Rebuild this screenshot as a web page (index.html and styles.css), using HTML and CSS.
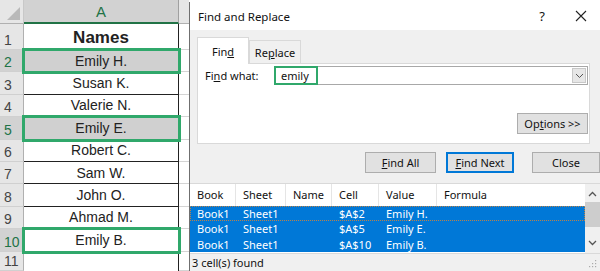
FILE: index.html
```html
<!DOCTYPE html>
<html lang="en">
<head>
<meta charset="UTF-8" />
<title>Find and Replace</title>
<link rel="stylesheet" href="styles.css">
</head>
<body>
<div class="sheet">
<div class="corner"><span class="tri"></span></div><div class="colhead sel">A</div><div class="colhead">&nbsp;</div>
<div class="rh">1</div><div class="cell head">Names</div><div class="cb"></div>
<div class="rh sel">2</div><div class="cell found">Emily H.</div><div class="cb"></div>
<div class="rh">3</div><div class="cell">Susan K.</div><div class="cb"></div>
<div class="rh">4</div><div class="cell">Valerie N.</div><div class="cb"></div>
<div class="rh sel">5</div><div class="cell found">Emily E.</div><div class="cb"></div>
<div class="rh">6</div><div class="cell">Robert C.</div><div class="cb"></div>
<div class="rh">7</div><div class="cell">Sam W.</div><div class="cb"></div>
<div class="rh">8</div><div class="cell">John O.</div><div class="cb"></div>
<div class="rh">9</div><div class="cell">Ahmad M.</div><div class="cb"></div>
<div class="rh sel">10</div><div class="cell active">Emily B.</div><div class="cb"></div>
<div class="rh">11</div><div class="cell last"></div><div class="cb"></div>
</div>

<div class="dialog">
<div class="titlebar">
<span>Find and Replace</span>
<span class="tb-icons"><span class="help">?</span>
<svg width="12" height="12" viewBox="0 0 12 12"><path d="M1 1 L11 11 M11 1 L1 11" stroke="#222" stroke-width="1.1" fill="none"/></svg></span>
</div>

<div class="tabs">
<div class="tab on">Fin<u>d</u></div>
<div class="tab">Re<u>p</u>lace</div>
</div>

<div class="panel">
<div class="findrow">
<label>Fi<u>n</u>d what:</label>
<div class="input">
<span class="typed">emily</span>
<span class="drop"><svg width="9" height="6" viewBox="0 0 9 6"><path d="M1 1 L4.5 4.5 L8 1" stroke="#555" stroke-width="1" fill="none"/></svg></span>
</div>
</div>
<div class="optrow"><button class="btn">Op<u>t</u>ions &gt;&gt;</button></div>
</div>

<div class="actions">
<button class="btn"><u>F</u>ind All</button>
<button class="btn default"><u>F</u>ind Next</button>
<button class="btn close">Close</button>
</div>

<div class="results">
<div class="grid">
<div class="lhead">
<span class="c1">Book</span><span class="c2">Sheet</span><span class="c3">Name</span><span class="c4">Cell</span><span class="c5">Value</span><span class="c6">Formula</span>
</div>
<div class="lrow focus">
<span class="c1">Book1</span><span class="c2">Sheet1</span><span class="c3"></span><span class="c4">$A$2</span><span class="c5">Emily H.</span><span class="c6"></span>
</div>
<div class="lrow">
<span class="c1">Book1</span><span class="c2">Sheet1</span><span class="c3"></span><span class="c4">$A$5</span><span class="c5">Emily E.</span><span class="c6"></span>
</div>
<div class="lrow">
<span class="c1">Book1</span><span class="c2">Sheet1</span><span class="c3"></span><span class="c4">$A$10</span><span class="c5">Emily B.</span><span class="c6"></span>
</div>
</div>
<div class="scroll">
<svg width="15" height="14" viewBox="0 0 15 14"><path d="M4 9 L7.5 5.5 L11 9" stroke="#555" stroke-width="1.3" fill="none"/></svg>
<div class="thumb"></div>
<svg class="down" width="15" height="14" viewBox="0 0 15 14"><path d="M4 5 L7.5 8.5 L11 5" stroke="#555" stroke-width="1.3" fill="none"/></svg>
</div>
</div>

<div class="status">
<span>3 cell(s) found</span>
<svg width="8" height="8" viewBox="0 0 8 8" fill="#aaa"><rect x="6" y="0" width="1.2" height="1.2"/><rect x="3" y="3" width="1.2" height="1.2"/><rect x="6" y="3" width="1.2" height="1.2"/><rect x="0" y="6" width="1.2" height="1.2"/><rect x="3" y="6" width="1.2" height="1.2"/><rect x="6" y="6" width="1.2" height="1.2"/></svg>
</div>
</div>
</body>
</html>
```

FILE: styles.css
```css
body {
margin: 0;
width: 600px;
height: 271px;
overflow: hidden;
display: flex;
background: #fff;
}

/* worksheet */
.sheet {
width: 189px;
height: 271px;
display: grid;
grid-template-columns: 24px 155px 10px;
grid-template-rows: 24px 26px repeat(9, 22.4px) 1fr;
font-family: "Liberation Sans", Arial, sans-serif;
font-size: 14px;
color: #222;
}

.corner {
background: #e6e6e6;
border-right: 1px solid #c8c8c8;
border-bottom: 1px solid #b0b0b0;
position: relative;
}

.tri {
position: absolute;
right: 3px;
bottom: 3px;
width: 0;
height: 0;
border-left: 13px solid transparent;
border-bottom: 13px solid #b9b9b9;
}

.colhead {
background: #e6e6e6;
border-bottom: 1px solid #b0b0b0;
display: flex;
align-items: center;
justify-content: center;
font-size: 15px;
color: #444;
}

.colhead.sel {
background: #d2d2d2;
color: #217346;
border-right: 1px solid #a0a0a0;
border-bottom: 2px solid #217346;
}

.rh {
background: #e6e6e6;
border-right: 1px solid #b0b0b0;
border-bottom: 1px solid #d0d0d0;
display: flex;
align-items: flex-end;
padding: 0 0 1px 4px;
font-size: 14px;
color: #444;
}

.rh.sel {
background: #d2d2d2;
color: #217346;
}

.cell {
border-right: 1px solid #222;
border-bottom: 1px solid #222;
display: flex;
align-items: center;
justify-content: center;
}

.cell.head {
font-weight: bold;
font-size: 17px;
padding-top: 2px;
}

.cell.found {
background: #d0d0d0;
outline: 3px solid #30a86b;
outline-offset: -1px;
position: relative;
}

.cell.active {
outline: 3px solid #30a86b;
outline-offset: -1px;
position: relative;
}

.cell.last {
border-bottom: none;
}

.cb {
background: #fff;
border-bottom: 1px solid #d4d4d4;
}

/* dialog */
.dialog {
width: 410px;
height: 269px;
margin-top: 2px;
border-left: 1px solid #6f6f6f;
background: #f0f0f0;
display: flex;
flex-direction: column;
font-family: "Noto Sans", "Liberation Sans", sans-serif;
font-size: 11px;
color: #111;
}

.titlebar {
height: 28px;
background: #fff;
display: flex;
align-items: center;
justify-content: space-between;
padding: 0 13px 0 8px;
font-size: 11.5px;
}

.tb-icons {
display: flex;
align-items: center;
gap: 30px;
}

.help {
font-size: 13px;
}

.tabs {
display: flex;
align-items: flex-end;
margin: 7px 0 0 7px;
height: 26px;
}

.tab {
width: 50px;
height: 22px;
border: 1px solid #d9d9d9;
border-bottom: none;
display: flex;
align-items: center;
justify-content: center;
background: #f0f0f0;
}

.tab.on {
height: 26px;
background: #fff;
margin-bottom: -1px;
position: relative;
}

.panel {
margin: 0 10px 0 7px;
height: 79px;
background: #fff;
border: 1px solid #d9d9d9;
display: flex;
flex-direction: column;
}

.findrow {
display: flex;
align-items: center;
margin-top: 2px;
padding-left: 7px;
}

.findrow label {
width: 69px;
}

.input {
flex: 1;
height: 17px;
margin-right: 1px;
border: 1px solid #a8a8a8;
display: flex;
align-items: center;
justify-content: space-between;
}

.typed {
width: 44px;
margin-left: -1px;
border: 2px solid #30a86b;
box-sizing: border-box;
height: 19px;
padding-left: 5px;
display: flex;
align-items: center;
}

.drop {
width: 14px;
height: 15px;
margin-right: 1px;
background: #e6e6e6;
border: 1px solid #c8c8c8;
box-sizing: border-box;
display: flex;
align-items: center;
justify-content: center;
}

.optrow {
display: flex;
justify-content: flex-end;
margin-top: 28px;
padding-right: 1px;
}

.btn {
font-family: inherit;
font-size: 11px;
color: #111;
height: 21px;
width: 71px;
padding: 0;
background: #e1e1e1;
border: 1px solid #adadad;
}

.actions {
display: flex;
margin: 8px 0 0 175px;
gap: 10px;
}

.btn.default {
width: 68px;
border: 2px solid #0078d7;
}

.btn.close {
margin-left: 8px;
width: 68px;
}

.results {
margin-top: 10px;
height: 69px;
display: flex;
background: #fff;
border-top: 1px solid #d9d9d9;
border-bottom: 1px solid #d9d9d9;
}

.grid {
flex: 1;
}

.lhead,
.lrow {
display: flex;
}

.lhead {
height: 22px;
align-items: center;
}

.lhead span {
height: 22px;
line-height: 22px;
border-right: 1px solid #e5e5e5;
}

.lrow {
height: 15.4px;
line-height: 15px;
background: #0078d7;
color: #fff;
}

.lrow.focus {
outline: 1px dotted #b9824a;
outline-offset: -1px;
}

.c1, .c2, .c3, .c4, .c5, .c6 {
box-sizing: border-box;
padding-left: 7px;
white-space: nowrap;
}

.c1 { width: 46px; }
.c2 { width: 50px; }
.c3 { width: 46px; }
.c4 { width: 47px; }
.c5 { width: 58px; }
.c6 { flex: 1; border-right: none !important; }

.scroll {
width: 15px;
background: #f0f0f0;
display: flex;
flex-direction: column;
align-items: center;
padding-top: 3px;
}

.thumb {
width: 15px;
height: 25px;
background: #cdcdcd;
margin-top: 1px;
}

.down {
margin-top: auto;
margin-bottom: 3px;
}

.status {
flex: 1;
display: flex;
align-items: center;
justify-content: space-between;
padding: 0 3px 0 2px;
}

.status svg {
align-self: flex-end;
margin-bottom: 3px;
}
```
